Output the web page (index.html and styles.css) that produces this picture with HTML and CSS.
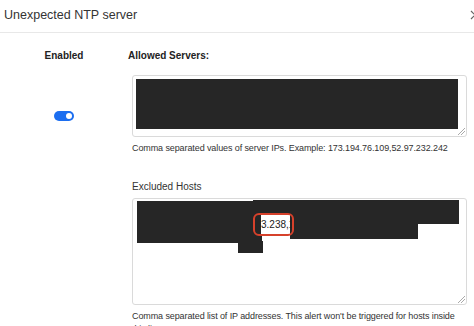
FILE: index.html
```html
<!DOCTYPE html>
<html lang="en">
<head>
    <meta charset="UTF-8">
    <title>Unexpected NTP server</title>
    <link rel="stylesheet" href="styles.css">
</head>
<body>
    <div class="modal">
        <div class="modal-header">
            <div class="modal-title">Unexpected NTP server</div>
            <svg class="close" width="10" height="10" viewBox="0 0 10 10">
                <path d="M1 1 L9 9 M9 1 L1 9" stroke="#666" stroke-width="1.2" fill="none"/>
            </svg>
        </div>

        <div class="modal-body">
            <div class="col-head">Enabled</div>
            <div class="col-head left">Allowed Servers:</div>

            <div class="toggle-cell">
                <span class="toggle"><span class="knob"></span></span>
            </div>
            <div class="fields">
                <div class="field">
                    <div class="textarea small">
                        <div class="redact r-allowed"></div>
                        <span class="grip"></span>
                    </div>
                    <div class="help">Comma separated values of server IPs. Example: 173.194.76.109,52.97.232.242</div>
                </div>

                <div class="field">
                    <div class="label">Excluded Hosts</div>
                    <div class="textarea large">
                        <div class="redact r1"></div>
                        <div class="redact r2"></div>
                        <div class="redact r3"></div>
                        <div class="redact r4"></div>
                        <div class="redact r5"></div>
                        <div class="highlight">3.238,1</div>
                        <span class="grip"></span>
                    </div>
                    <div class="help">Comma separated list of IP addresses. This alert won't be triggered for hosts inside this list.</div>
                </div>
            </div>
        </div>
    </div>
</body>
</html>
```

FILE: styles.css
```css
* {
    margin: 0;
    padding: 0;
    box-sizing: border-box;
}

body {
    background: #fff;
    font-family: 'Liberation Sans', Arial, sans-serif;
    color: #222;
    overflow: hidden;
}

.modal {
    width: 474px;
}

.modal-header {
    height: 33px;
    display: flex;
    align-items: center;
    justify-content: space-between;
    padding: 0 0 2px 4px;
    border-bottom: 1px solid #e8e8e8;
}

.modal-title {
    font-size: 12.5px;
    color: #333;
}

.close {
    flex-shrink: 0;
    margin-right: -6px;
}

.modal-body {
    display: grid;
    grid-template-columns: 128px 1fr;
    padding-top: 17px;
}

.col-head {
    font-size: 10px;
    font-weight: bold;
    text-align: center;
    height: 25px;
}

.col-head.left {
    text-align: left;
}

.toggle-cell {
    display: flex;
    justify-content: center;
    padding: 36px 0 0 0;
}

.toggle {
    width: 20px;
    height: 10px;
    border-radius: 5px;
    background: #1c6ef0;
    position: relative;
}

.knob {
    position: absolute;
    right: 2px;
    top: 2px;
    width: 6px;
    height: 6px;
    border-radius: 50%;
    background: #fff;
}

.fields {
    padding-left: 4px;
    padding-right: 7px;
}

.field {
    margin-bottom: 26px;
}

.label {
    font-size: 10px;
    color: #333;
    margin-bottom: 6px;
}

.textarea {
    border: 1px solid #dadada;
    border-radius: 3px;
    position: relative;
    padding: 3px 8px 0 3px;
}

.textarea.small {
    height: 62px;
}

.textarea.large {
    height: 107px;
}

.redact {
    background: #262626;
}

.r-allowed {
    height: 50px;
}

/* redacted blocks over the hosts list */
.r1, .r2, .r3, .r4, .r5 {
    position: absolute;
}

.r1 { left: 4px;   top: 2px;  width: 125px; height: 42px; }
.r2 { left: 105px; top: 42px; width: 25px;  height: 12px; }
.r3 { left: 120px; top: 1px;  width: 45px;  height: 14px; }
.r4 { left: 157px; top: 1px;  width: 128px; height: 39px; }
.r5 { left: 280px; top: 1px;  width: 46px;  height: 24px; }

.highlight {
    position: absolute;
    left: 120px;
    top: 14px;
    width: 41px;
    height: 23px;
    border: 2px solid #d6412b;
    border-radius: 6px;
    font-size: 10px;
    line-height: 19px;
    padding-left: 6px;
    color: #222;
    overflow: hidden;
    white-space: nowrap;
    background: linear-gradient(90deg, #262626 6px, #fff 6px, #fff 35px, #262626 35px);
}

.grip {
    position: absolute;
    right: 1px;
    bottom: 1px;
    width: 7px;
    height: 7px;
    background: linear-gradient(135deg, transparent 45%, #aaa 45%, #aaa 52%, transparent 52%, transparent 70%, #aaa 70%, #aaa 77%, transparent 77%);
}

.help {
    font-size: 9px;
    letter-spacing: -0.1px;
    color: #333;
    line-height: 13px;
    margin-top: 5px;
}
```
